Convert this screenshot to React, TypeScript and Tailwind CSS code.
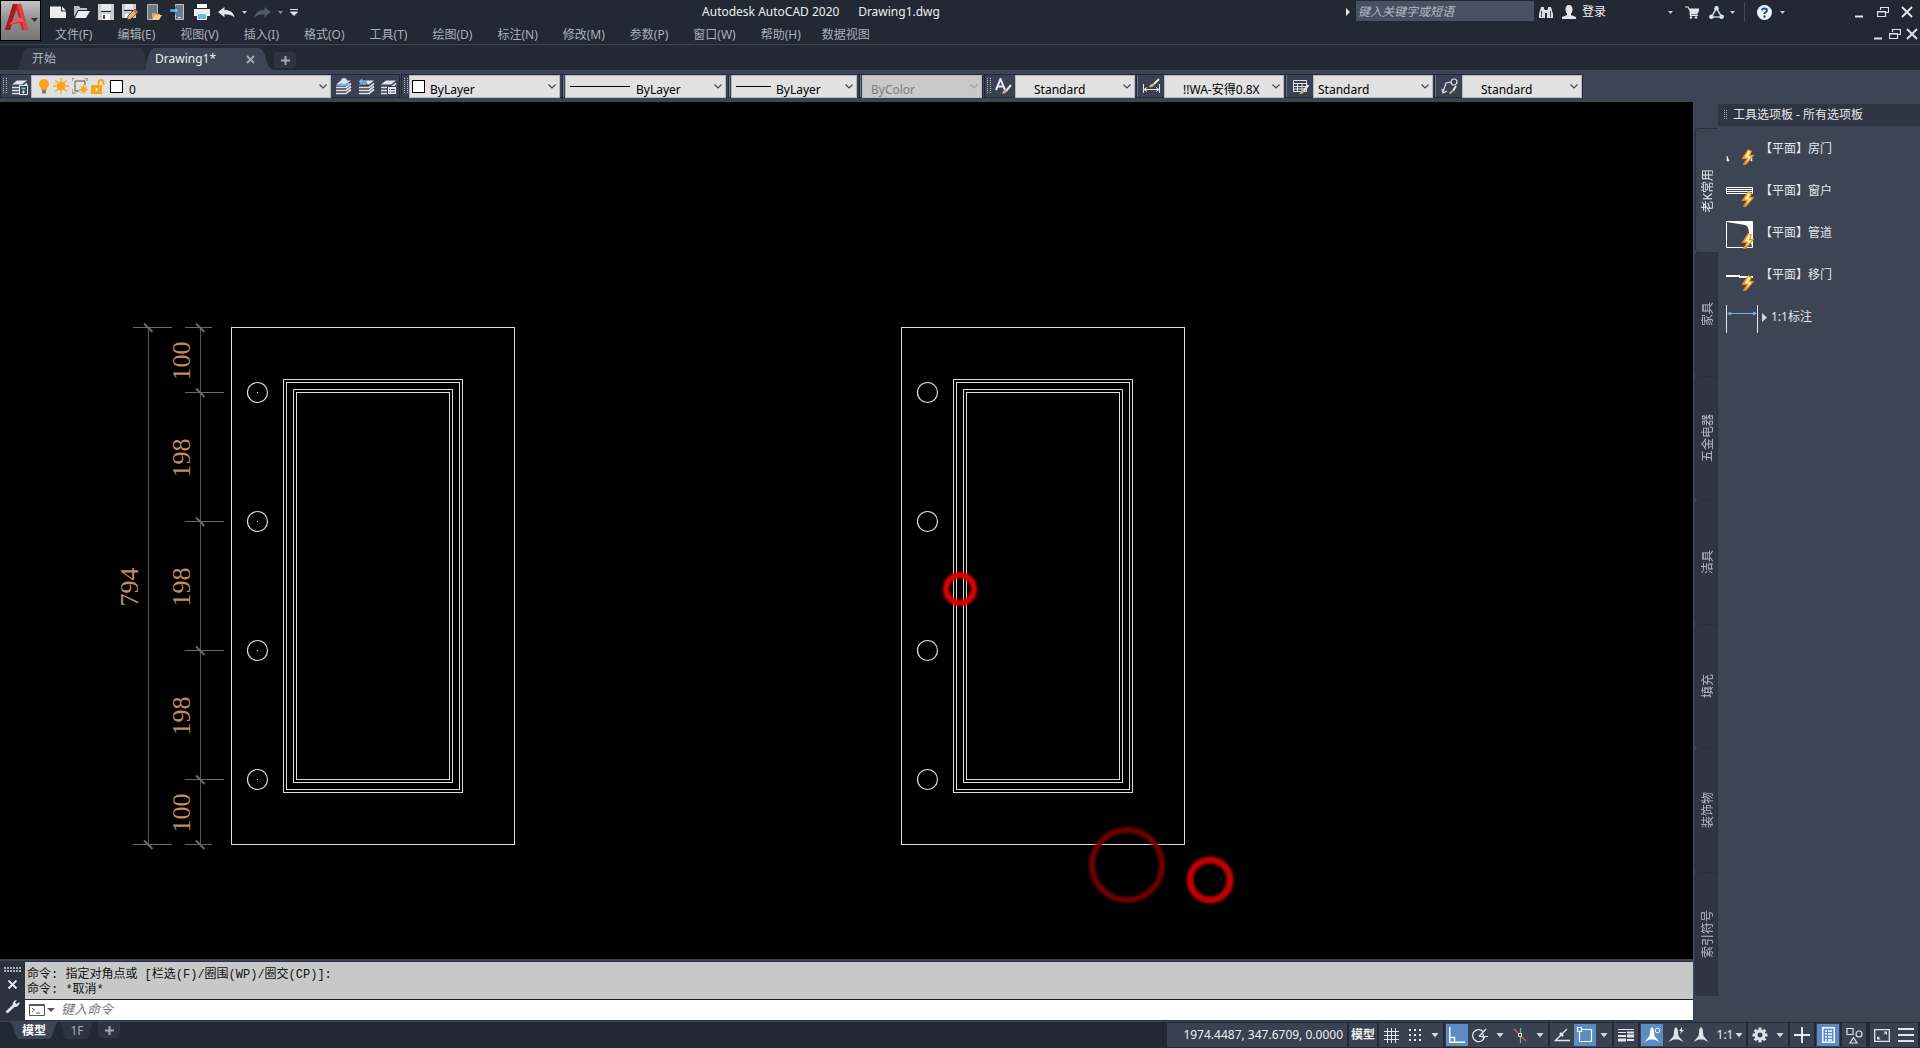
import type { ReactNode } from 'react';

interface IconProps {
    children: ReactNode;
    label: string;
    className?: string;
}

// Plain icon button used by every bar
function IconButton({ children, label, className = 'w-6 h-6' }: IconProps) {
    return (
        <button aria-label={label} className={`flex shrink-0 items-center justify-center ${className}`}>
            {children}
        </button>
    );
}

function Caret({ label, className = 'w-4 h-6' }: { label: string; className?: string }) {
    return (
        <IconButton label={label} className={className}>
            <svg width="8" height="5" viewBox="0 0 8 5"><path d="M0.5 0h7L4 4.5z" fill="#d5d8de" /></svg>
        </IconButton>
    );
}

function SmallCaret({ label, className = 'w-2 h-6', fill = '#c8ccd4' }: { label: string; className?: string; fill?: string }) {
    return (
        <IconButton label={label} className={className}>
            <svg width="5" height="3" viewBox="0 0 5 3"><path d="M0 0h5L2.5 3z" fill={fill} /></svg>
        </IconButton>
    );
}

function Grip() {
    return (
        <svg width="4" height="16" className="shrink-0" viewBox="0 0 4 16">
            {[1, 3, 5, 7, 9, 11, 13, 15].map((y) => (
                <path key={y} d={`M0 ${y - 0.5}h1M3 ${y - 0.5}h1`} stroke="#b9bfca" />
            ))}
        </svg>
    );
}

function Divider() {
    return <span className="mx-px h-[22px] w-0.5 shrink-0 border-r border-[#6d7486] bg-[#222834]" />;
}

interface PickerProps {
    label: string;
    value: string;
    width: string;
    pad?: string;
    disabled?: boolean;
    children?: ReactNode;
}

function Picker({ label, value, width, pad = 'pl-1.5', disabled = false, children }: PickerProps) {
    return (
        <div className={`relative h-[23px] shrink-0 border border-[#b4b6c0] ${disabled ? 'bg-[#c9c9c9]' : 'bg-[#e1e1e1]'} ${width}`}>
            <select
                aria-label={label}
                disabled={disabled}
                defaultValue={value}
                className={`h-full w-full appearance-none overflow-hidden bg-transparent pr-5 pb-0.5 text-[12px] ${pad} ${disabled ? 'text-[#7d7d7d]' : 'text-black'}`}
            >
                <option>{value}</option>
            </select>
            <div className="pointer-events-none absolute inset-y-0 left-0 flex items-center">{children}</div>
            <svg width="8" height="5" viewBox="0 0 8 5" className="pointer-events-none absolute top-2 right-[3px]">
                <path d="M0.5 0.5L4 4L7.5 0.5" fill="none" stroke={disabled ? '#a5a5a5' : '#444'} strokeWidth="1.1" />
            </svg>
        </div>
    );
}

const menus = ['文件(F)', '编辑(E)', '视图(V)', '插入(I)', '格式(O)', '工具(T)', '绘图(D)', '标注(N)', '修改(M)', '参数(P)', '窗口(W)', '帮助(H)'];

function WindowControls({ small = false }: { small?: boolean }) {
    const cell = small ? 'w-[17px] h-5' : 'w-6 h-6';
    return (
        <div className="flex shrink-0">
            <IconButton label="最小化" className={cell}>
                <svg width="12" height="12" viewBox="0 0 12 12"><path d="M2 10.5h8" stroke="#dfe2e8" strokeWidth="2" /></svg>
            </IconButton>
            <IconButton label="还原" className={cell}>
                <svg width="12" height="12" viewBox="0 0 12 12" fill="none" stroke="#dfe2e8">
                    <path d="M3.5 4V1.5h8v5H9" strokeWidth="1.2" />
                    <path d="M0.5 5.5h8v5h-8zM0.5 6h8" strokeWidth="1.2" />
                </svg>
            </IconButton>
            <IconButton label="关闭" className={cell}>
                <svg width="12" height="12" viewBox="0 0 12 12"><path d="M1 1l10 10M11 1L1 11" stroke="#e6e9ee" strokeWidth="1.8" /></svg>
            </IconButton>
        </div>
    );
}

function QuickAccess() {
    return (
        <div className="flex shrink-0 items-center pl-[5px]">
            <IconButton label="新建">
                <svg width="18" height="16" viewBox="0 0 18 16"><path d="M1 2.5h11v5h5v6.500H1z" fill="#eceef1" /><path d="M13 2.500L17 6.500h-4z" fill="#eceef1" /></svg>
            </IconButton>
            <IconButton label="打开">
                <svg width="18" height="16" viewBox="0 0 18 16"><path d="M1 2h5l1.500 2H14v2H5L1 13z" fill="#b9bdc4" /><path d="M5.500 7H17l-4 7H2z" fill="#eceef1" /></svg>
            </IconButton>
            <IconButton label="保存">
                <svg width="16" height="16" viewBox="0 0 16 16"><path d="M0 0h16v16H0z" fill="#c9cbd0" /><path d="M3 0h10v6H3z" fill="#e9e9ec" /><path d="M3 7h10v1H3z" fill="#222933" /><path d="M4 10h8v6H4z" fill="#fff" /><path d="M5 11h2v4H5z" fill="#444b57" /></svg>
            </IconButton>
            <IconButton label="另存为">
                <svg width="16" height="16" viewBox="0 0 16 16"><path d="M0 0h14v14H0z" fill="#c9cbd0" /><path d="M3 0h8v5H3z" fill="#e9e9ec" /><path d="M2 6h10v1H2z" fill="#222933" /><path d="M3 10h5v4H3z" fill="#fff" /><path d="M13 5l3 3-7 7-4 1 1-4z" fill="#e8b768" stroke="#222933" strokeWidth=".7" /><path d="M13 5l3 3-2 2-3-3z" fill="#e26e5c" /></svg>
            </IconButton>
            <IconButton label="从 Web 和 Mobile 中打开">
                <svg width="16" height="16" viewBox="0 0 16 16"><path d="M1.500 0.500h10v15h-10z" fill="#737a85" stroke="#aeb3bb" /><path d="M6 9h3l1 1h4v2H9l-3 3z" fill="#e0a84e" /><path d="M9 11h7l-3 5H6z" fill="#f7ce84" /></svg>
            </IconButton>
            <IconButton label="保存到 Web 和 Mobile">
                <svg width="16" height="16" viewBox="0 0 16 16"><path d="M5.500 0.500h8v15h-8z" fill="#737a85" stroke="#c0c4ca" /><path d="M0 5h5V2.500L9.500 6.500 5 10.500V8H0z" fill="#6ab4ec" stroke="#222933" strokeWidth=".5" /><path d="M8 13.500h3" stroke="#ddd" /></svg>
            </IconButton>
            <IconButton label="打印">
                <svg width="16" height="16" viewBox="0 0 16 16"><path d="M3 0h10v4H3z" fill="#fff" /><path d="M0 5h16v7h-3V9H3v3H0z" fill="#eceef1" /><path d="M3.500 9.500h9v6h-9z" fill="#6db5ef" stroke="#fff" /></svg>
            </IconButton>
            <IconButton label="放弃">
                <svg width="17" height="11" viewBox="0 0 17 11"><path d="M0 5L6.500 0v3C12 3 15.500 5 16.500 10.500 14 8 11 7.200 6.500 7.200v3z" fill="#e4e6ea" /></svg>
            </IconButton>
            <SmallCaret label="放弃列表" className="w-3 h-6" />
            <IconButton label="重做">
                <svg width="17" height="11" viewBox="0 0 17 11"><path d="M17 5L10.500 0v3C5 3 1.500 5 .5 10.500 3 8 6 7.200 10.500 7.200v3z" fill="#515965" /></svg>
            </IconButton>
            <SmallCaret label="重做列表" className="w-3 h-6" fill="#8b919b" />
            <IconButton label="自定义快速访问工具栏" className="w-4 h-6">
                <svg width="8" height="7" viewBox="0 0 8 7"><path d="M0 .5h8M0.500 3h7L4 6.500z" stroke="#dfe2e8" strokeWidth="1" fill="#dfe2e8" /></svg>
            </IconButton>
        </div>
    );
}

function Header() {
    return (
        <header className="flex h-[45px] shrink-0 border-b border-[#3d4450] bg-[#222933]">
            <button aria-label="应用程序菜单" className="h-[41px] w-[41px] shrink-0 border border-black bg-linear-to-b from-[#c3c3c3] via-[#8f8f8f] to-[#777]">
                <svg width="39" height="39" viewBox="0 0 39 39">
                    <path d="M12 3h8l7 26h-6l-2-7-8 1-2 6H4z" fill="#c9252c" />
                    <path d="M12 3h4L9 29H4z" fill="#a81920" />
                    <path d="M16 3h4l7 26h-4z" fill="#e0444a" />
                    <path d="M15.500 9l3 9-7 1z" fill="#8c8c8c" />
                    <path d="M8 24c3-5 8-7 13-7l1 4c-6 0-10 1-14 3z" fill="#ef5a5e" />
                    <path d="M30 17h7l-3.500 4z" fill="#333" />
                </svg>
            </button>
            <div className="flex min-w-0 flex-1 flex-col">
                <div className="flex h-6 items-center">
                    <QuickAccess />
                    <h1 className="min-w-0 flex-1 text-center text-[12px] leading-5 whitespace-pre text-[#eceef1]">{'Autodesk AutoCAD 2020      Drawing1.dwg'}</h1>
                    <IconButton label="展开搜索" className="w-4 h-6">
                        <svg width="4" height="8" viewBox="0 0 4 8"><path d="M0 0l4 4-4 4z" fill="#e4e6ea" /></svg>
                    </IconButton>
                    <input aria-label="搜索" placeholder="键入关键字或短语" className="mb-0.5 h-5 w-[178px] bg-[#485161] px-0.5 text-[12px] italic text-white placeholder:text-[#b5bac4]" />
                    <IconButton label="查找">
                        <svg width="14" height="13" viewBox="0 0 14 13" fill="#d9dce2"><path d="M2 1h3v2l1 1v8H0V8zM12 1H9v2L8 4v8h6V8z" /><path d="M6 4h2v3H6z" /><path d="M2.500 5v6M11.500 5v6" stroke="#4a5260" /></svg>
                    </IconButton>
                    <button className="flex h-6 items-center gap-1.5 pl-1 text-[12px] text-[#eceef1]">
                        <svg width="14" height="14" viewBox="0 0 14 14" fill="#e4e6ea"><ellipse cx="7" cy="4.500" rx="3.500" ry="4.500" /><path d="M5 8h4v2l5 2v2H0v-2l5-2z" /></svg>
                        登录
                    </button>
                    <SmallCaret label="登录选项" className="ml-[60px] w-2 h-6" />
                    <div className="ml-1.5 flex items-center">
                        <IconButton label="Autodesk App Store">
                            <svg width="14" height="13" viewBox="0 0 14 13"><path d="M0 1h3l1 2h10l-2 5H5l.5 1.500H13" fill="none" stroke="#dfe2e8" strokeWidth="1.200" /><path d="M4 3h10l-2 5H5z" fill="#dfe2e8" /><circle cx="6" cy="11.500" r="1.300" fill="#dfe2e8" /><circle cx="11" cy="11.500" r="1.300" fill="#dfe2e8" /></svg>
                        </IconButton>
                        <IconButton label="保持连接">
                            <svg width="15" height="13" viewBox="0 0 15 13"><path d="M7.500 2L2.500 11h10z" fill="none" stroke="#b9c6dc" strokeWidth="1.600" /><g fill="#dfe6f2"><circle cx="7.500" cy="2.200" r="2.200" /><circle cx="2.300" cy="10.700" r="2.200" /><circle cx="12.700" cy="10.700" r="2.200" /></g></svg>
                        </IconButton>
                        <SmallCaret label="连接选项" />
                        <span className="mx-2 h-5 w-px bg-[#434a57]" />
                        <IconButton label="帮助" className="w-[22px] h-6">
                            <svg width="15" height="15" viewBox="0 0 15 15"><circle cx="7.500" cy="7.500" r="7.500" fill="#eef2f8" /><path d="M5 5.500C5 2.800 10 2.800 10 5.500 10 7.200 7.500 7 7.500 9" fill="none" stroke="#1d4b93" strokeWidth="1.900" /><circle cx="7.500" cy="11.500" r="1.200" fill="#1d4b93" /></svg>
                        </IconButton>
                        <SmallCaret label="帮助选项" className="w-3.5 h-6" />
                    </div>
                    <div className="ml-[58px] pr-px"><WindowControls /></div>
                </div>
                <div className="flex h-5 items-center justify-between">
                    <nav className="flex gap-[25px] pt-0.5 pl-3.5 text-[12px] text-[#a9aeb8]">
                        {menus.map((menu) => <button key={menu}>{menu}</button>)}
                        <button className="-ml-1">数据视图</button>
                    </nav>
                    <WindowControls small />
                </div>
            </div>
        </header>
    );
}

function FileTabs() {
    return (
        <div className="flex h-[25px] shrink-0 items-end bg-[#222933] pl-4 text-[12px]">
            <button className="relative h-[22px] w-[130px] pl-4 text-left text-[#b0b5bf]">
                <svg className="absolute inset-0 h-full w-full" viewBox="0 0 130 22" preserveAspectRatio="none"><path d="M0 22C6 20 4 2 12 0H124C128 1 130 10 130 22z" fill="#2f3541" /></svg>
                <span className="relative">开始</span>
            </button>
            <div className="relative flex h-[22px] w-[128px] items-center pr-4 pl-[9px] text-[#eceef1]">
                <svg className="absolute inset-0 h-full w-full" viewBox="0 0 128 22" preserveAspectRatio="none"><path d="M-4 22C2 20 1 2 8 0H112C122 1 118 20 128 22z" fill="#3d4453" /></svg>
                <button className="relative flex-1 text-left">Drawing1*</button>
                <IconButton label="关闭图形" className="relative w-4 h-5">
                    <svg width="9" height="9" viewBox="0 0 9 9"><path d="M1 1l7 7M8 1L1 8" stroke="#a2a8b3" strokeWidth="2" /></svg>
                </IconButton>
            </div>
            <IconButton label="新图形" className="mb-0.5 h-4 w-[22px] rounded bg-[#2e3441]">
                <svg width="9" height="9" viewBox="0 0 9 9"><path d="M4.500 0v9M0 4.500h9" stroke="#a2a8b3" strokeWidth="2" /></svg>
            </IconButton>
        </div>
    );
}

function Layers({ children }: { children?: ReactNode }) {
    return (
        <svg width="17" height="17" viewBox="0 0 17 17">
            <path d="M6 2.500h10l-5 4H1z" fill="#e4e6ea" />
            <path d="M1 9.500h10l5-4M1 12.500h10l5-4M1 15.500h10l5-4" fill="none" stroke="#dfe2e8" strokeWidth="1.700" />
            {children}
        </svg>
    );
}

function Toolbar() {
    return (
        <div className="flex h-8 shrink-0 items-center gap-px bg-[#3d4454]">
            <div className="flex h-6 items-center border border-[#222834] bg-[#3a4151] pl-0.5">
                <Grip />
                <IconButton label="图层特性管理器" className="w-6 h-6">
                    <Layers><path d="M8.500 7.500h8v9h-8z" fill="#3a4151" stroke="#e4e6ea" /><path d="M10.500 9.500h4v2h-4z" fill="#6db5ef" /><path d="M12.500 12.500v3M11 14h3" stroke="#fff" /></Layers>
                </IconButton>
                <Picker label="图层" value="0" width="w-[300px]" pad="pl-[97px]">
                    <div className="flex items-center pl-1.5">
                        <svg width="12" height="15" viewBox="0 0 12 15"><circle cx="6" cy="5" r="5" fill="#f9a51a" /><path d="M3 8h6v3H3z" fill="#f9a51a" /><path d="M4 11h4v3.500H4z" fill="#777" /></svg>
                        <svg width="16" height="16" viewBox="0 0 16 16" className="ml-[3px]"><circle cx="8" cy="8" r="4.500" fill="#f9a51a" /><path d="M8 0v3M8 13v3M0 8h3M13 8h3M2.500 2.500l2 2M11.500 11.500l2 2M2.500 13.500l2-2M11.500 4.500l2-2" stroke="#f9a51a" strokeWidth="1.300" /></svg>
                        <svg width="16" height="16" viewBox="0 0 16 16" className="ml-[3px]"><path d="M3 3h10v10H3z" fill="none" stroke="#555" /><path d="M0 3V0h3M12 0h3v3M0 11v4h4" fill="none" stroke="#777" /><circle cx="11.500" cy="11.500" r="4.500" fill="#e1e1e1" /><circle cx="11.500" cy="11.500" r="3" fill="#f9a51a" /><path d="M11.500 7v9M7 11.500h9M8.500 8.500l6 6M14.500 8.500l-6 6" stroke="#f9a51a" strokeWidth=".8" /></svg>
                        <svg width="14" height="15" viewBox="0 0 14 15" className="ml-[3px]"><path d="M0 6h11v9H0z" fill="#f9a51a" /><path d="M7.500 6V3.500a2.500 2.500 0 0 1 5 0V6" fill="none" stroke="#f9a51a" strokeWidth="1.800" /><path d="M5.500 9v3" stroke="#fff" strokeWidth="1.500" /></svg>
                        <span className="ml-[5px] h-[13px] w-[13px] border border-black bg-white" />
                    </div>
                </Picker>
                <IconButton label="将对象的图层置为当前">
                    <Layers><path d="M6 5h9l-4 3H1z" fill="#6db5ef" /><circle cx="9" cy="3" r="3" fill="#dfe2e8" /></Layers>
                </IconButton>
                <IconButton label="上一个图层" className="w-[22px] h-6">
                    <Layers><path d="M0 3.500L4.500 0v2C8 2 9 4 9 7 7.500 5 6.500 5 4.500 5v2z" fill="#6db5ef" stroke="#3a4151" strokeWidth=".5" /></Layers>
                </IconButton>
                <IconButton label="图层状态管理器" className="w-[22px] h-6">
                    <Layers><path d="M7.500 8.500h9v8h-9z" fill="#e4e6ea" stroke="#3a4151" /><path d="M9 11.500h1M11 11.500h4M9 14h1M11 14h4" stroke="#444b57" /></Layers>
                </IconButton>
            </div>

            <div className="flex h-6 items-center border border-[#222834] bg-[#3a4151] pl-0.5">
                <Grip />
                <span className="w-px" />
                <Picker label="颜色" value="ByLayer" width="w-[151px]" pad="pl-5">
                    <span className="ml-0.5 h-[13px] w-[13px] border border-black bg-white" />
                </Picker>
                <span className="w-px" />
                <Divider />
                <Picker label="线型" value="ByLayer" width="w-[161px]" pad="pl-[70px]">
                    <span className="ml-1 h-px w-[60px] bg-black" />
                </Picker>
                <span className="w-px" />
                <Divider />
                <Picker label="线宽" value="ByLayer" width="w-[126px]" pad="pl-11">
                    <span className="ml-1 h-px w-[35px] bg-black" />
                </Picker>
                <span className="w-px" />
                <Divider />
                <Picker label="打印样式" value="ByColor" width="w-[120px]" pad="pl-2" disabled />
            </div>

            <div className="flex h-6 items-center border border-[#222834] bg-[#3a4151] pl-0.5">
                <Grip />
                <IconButton label="文字样式">
                    <svg width="17" height="17" viewBox="0 0 17 17"><path d="M1 12L5.500 1 10 12M3 8.500h5.500" fill="none" stroke="#e4e6ea" strokeWidth="2" /><path d="M16 7l-5 6" stroke="#e4e6ea" strokeWidth="2" /><path d="M7 15.500c1-3 3-4 5-2.500-1 2-3 3-5 2.500z" fill="#d8ae7a" /></svg>
                </IconButton>
                <Picker label="文字样式列表" value="Standard" width="w-[120px]" pad="pl-[18px]" />
                <Divider />
                <IconButton label="标注样式" className="w-[25px] h-6">
                    <svg width="17" height="17" viewBox="0 0 17 17"><path d="M.5 6v9M16.500 6v9M1 11.500h15M4 9.500l-3 2 3 2M13 9.500l3 2-3 2" fill="none" stroke="#dfe2e8" /><path d="M16 1l-5 5" stroke="#e4e6ea" strokeWidth="2" /><path d="M6 9c1-3 3-4 6-3-1 2-3 4-6 3z" fill="#d8ae7a" /></svg>
                </IconButton>
                <Picker label="标注样式列表" value="!!WA-安得0.8X" width="w-[120px]" pad="pl-[18px]" />
                <Divider />
                <IconButton label="表格样式" className="w-[25px] h-6">
                    <svg width="17" height="17" viewBox="0 0 17 17"><path d="M1.500 2.500h13v11h-13zM1.500 5.500h13M1.500 8.500h13M1.500 11h13M5.500 5v8.500M10 5v8.500" fill="none" stroke="#dfe2e8" /><path d="M16.500 7l-5 6" stroke="#e4e6ea" strokeWidth="2" /><path d="M7.500 16c1-3 3-4 5-3-1 2-3 3.500-5 3z" fill="#d8ae7a" /></svg>
                </IconButton>
                <Picker label="表格样式列表" value="Standard" width="w-[120px]" pad="pl-1" />
                <Divider />
                <IconButton label="多重引线样式" className="w-[25px] h-6">
                    <svg width="17" height="17" viewBox="0 0 17 17"><path d="M2 14L5 5l5-1M1 11l1 4 4-2" fill="none" stroke="#dfe2e8" strokeWidth="1.200" /><circle cx="13" cy="4" r="3" fill="none" stroke="#dfe2e8" strokeWidth="1.200" /><path d="M15 8l-3 5" stroke="#e4e6ea" strokeWidth="2" /><path d="M8 16c1-3 2-4 4-3-1 2-2 3-4 3z" fill="#d8ae7a" /></svg>
                </IconButton>
                <Picker label="多重引线样式列表" value="Standard" width="w-[120px]" pad="pl-[18px]" />
            </div>
        </div>
    );
}

const holes = [290.5, 419.5, 548.5, 677.5];

function Door({ x, marks = false }: { x: number; marks?: boolean }) {
    return (
        <g transform={`translate(${x} 225)`} fill="none" stroke="#dcdcdc">
            <rect x=".5" y=".5" width="283" height="517" />
            <rect x="52.500" y="52.500" width="179" height="413" />
            <rect x="55.500" y="55.500" width="173" height="407" />
            <rect x="62.500" y="62.500" width="159" height="393" />
            <rect x="65.500" y="65.500" width="153" height="387" />
            {holes.map((y) => (
                <g key={y}>
                    <circle cx="26.500" cy={y - 225} r="10" strokeWidth="1.200" />
                    {marks && <rect x="26" y={y - 225.5} width="1" height="1" fill="#fff" stroke="none" />}
                </g>
            ))}
        </g>
    );
}

function Tick({ x, y, from, to }: { x: number; y: number; from: number; to: number }) {
    return (
        <g stroke="#6a6a6a">
            <path d={`M${from} ${y}H${to}`} />
            <path d={`M${x - 4} ${y - 4}l8.500 8.500`} strokeWidth="2" />
        </g>
    );
}

const dimensions = [
    { x: 190, y: 259, text: '100' },
    { x: 190, y: 356, text: '198' },
    { x: 190, y: 485, text: '198' },
    { x: 190, y: 614, text: '198' },
    { x: 190, y: 711, text: '100' },
    { x: 138, y: 485, text: '794' },
];

function Drawing() {
    return (
        <main className="min-h-0 flex-1 overflow-hidden bg-black">
            <svg className="h-full w-full">
                <defs>
                    <filter id="soft" x="-30%" y="-30%" width="160%" height="160%"><feGaussianBlur stdDeviation="1" /></filter>
                </defs>
                <path d="M148.500 225.500v517M200.500 225.500v517" stroke="#555" />
                <Tick x={148} y={225.5} from={133} to={172} />
                <Tick x={148} y={742.5} from={133} to={172} />
                <Tick x={200} y={225.5} from={185} to={212} />
                <Tick x={200} y={742.5} from={185} to={212} />
                {holes.map((y) => <Tick key={y} x={200} y={y} from={185} to={224} />)}
                {dimensions.map((d, i) => (
                    <text key={i} transform={`translate(${d.x} ${d.y}) rotate(-90)`} textAnchor="middle" fill="#c08e5e" className="font-['Liberation_Serif',serif] text-[26px]">
                        {d.text}
                    </text>
                ))}
                <Door x={231} marks />
                <Door x={901} />
                {/* click ripples */}
                <g fill="none" filter="url(#soft)">
                    <circle cx="960" cy="487" r="14" stroke="#e00000" strokeWidth="6" />
                    <circle cx="1127" cy="763" r="35" stroke="#7a0000" strokeWidth="6" strokeOpacity=".9" />
                    <circle cx="1210" cy="778" r="20" stroke="#c00000" strokeWidth="7" />
                </g>
            </svg>
        </main>
    );
}

function CommandLine() {
    return (
        <section className="flex h-[62px] shrink-0 border-t-2 border-[#3d4454] bg-[#2c3240]">
            <div className="flex w-[25px] shrink-0 flex-col items-center gap-1 pt-1.5">
                <svg width="18" height="5" viewBox="0 0 18 5">
                    {[0, 3, 6, 9, 12, 15].map((x) => <path key={x} d={`M${x} 1h2M${x} 4h2`} stroke="#d5d8de" strokeWidth="1.500" />)}
                </svg>
                <IconButton label="关闭命令行" className="w-5 h-4">
                    <svg width="9" height="9" viewBox="0 0 9 9"><path d="M.5.5l8 8M8.500.5l-8 8" stroke="#dfe2e8" strokeWidth="2" /></svg>
                </IconButton>
                <IconButton label="自定义" className="w-5 h-5">
                    <svg width="15" height="15" viewBox="0 0 15 15"><path d="M1.500 13.500L9 6.500" stroke="#e4e6ea" strokeWidth="2.800" /><path d="M8 7C7 4 9 1 12 1l-2 2.500 1.500 1.500L14.500 3C15 6 12 8.500 9 8z" fill="#e4e6ea" /></svg>
                </IconButton>
            </div>
            <div className="flex min-w-0 flex-1 flex-col pt-px pb-px font-['Liberation_Mono','Noto_Sans_CJK_SC',monospace]">
                <div className="flex-1 bg-[#c8c8c8] pt-1.5 pl-0.5 text-[12px] leading-[15px] text-[#111]">
                    <p>命令: 指定对角点或 [栏选(F)/圈围(WP)/圈交(CP)]:</p>
                    <p>命令: *取消*</p>
                </div>
                <div className="flex h-[21px] items-center border-t border-[#222] bg-white pl-1">
                    <IconButton label="最近使用的命令" className="gap-0.5">
                        <svg width="16" height="12" viewBox="0 0 16 12"><path d="M.5.5h15v11H.5zM0 1.500h16" fill="none" stroke="#555" /><path d="M3 4l2.500 2L3 8M7 9h4" fill="none" stroke="#555" /></svg>
                        <svg width="8" height="4" viewBox="0 0 8 4"><path d="M0 0h8L4 4z" fill="#555" /></svg>
                    </IconButton>
                    <input aria-label="命令" placeholder="键入命令" className="ml-1.5 h-full flex-1 text-[13px] italic text-black placeholder:text-[#777]" />
                </div>
            </div>
        </section>
    );
}

const paletteTabs = ['老K常用', '家具', '五金电器', '洁具', '填充', '装饰物', '索引符号'];

function Bolt() {
    return (
        <svg width="14" height="16" viewBox="0 0 14 16" className="absolute top-3 left-[15px]">
            <path d="M7 0l4 2-1.500 4H13.500L5 16l-3.500-.5L5.500 10H.5z" fill="#e8931f" />
            <path d="M7.500 1.500L3.500 8.500h4L5 13.500 11 7.200H7.500L9.500 2.500z" fill="#fff0b0" />
        </svg>
    );
}

const paletteTools = [
    { name: '【平面】房门', art: <path d="M1 19v5h2zM25 21h1v3h-1z" fill="#fff" stroke="#fff" strokeWidth=".5" /> },
    { name: '【平面】窗户', art: <path d="M.5 8.500h26v6H.5zM.5 10.500h26M.5 12.500h26" fill="none" stroke="#fff" /> },
    { name: '【平面】管道', art: <><path d="M.5.5h26v26H.5z" fill="none" stroke="#fff" /><path d="M1 1h25v25l-3-11c0-8-1-10-4-11z" fill="#fff" /></> },
    { name: '【平面】移门', art: <path d="M0 12h14v2H0zM13 13h14v2H13z" fill="#fff" /> },
];

function Palette() {
    return (
        <aside className="flex w-[227px] shrink-0 bg-[#3d4454] pl-0.5 text-[12px] text-[#e4e6ea]">
            <div className="flex w-[23px] shrink-0 flex-col pt-[26px]">
                {paletteTabs.map((tab, i) => (
                    <button
                        key={tab}
                        className={`flex h-[124px] items-center justify-center rounded-l border-t border-l border-[#292f3b] pl-0.5 ${i === 0 ? 'bg-[#3d4454]' : 'border-r bg-[#2f3542] text-[#b5bac4]'}`}
                    >
                        <span className="rotate-180 leading-4 [text-orientation:sideways] [writing-mode:vertical-rl]">{tab}</span>
                    </button>
                ))}
            </div>
            <div className="min-w-0 flex-1 pt-0.5">
                <h2 className="flex h-[22px] items-center gap-1.5 bg-[#2f3542] pl-1.5 leading-5">
                    <svg width="3" height="10" viewBox="0 0 3 10"><path d="M.5 0v10M2.500 0v10" stroke="#a2a8b3" strokeDasharray="1 1" /></svg>
                    工具选项板 - 所有选项板
                </h2>
                <ul className="pt-1.5">
                    {paletteTools.map((tool) => (
                        <li key={tool.name} className="h-[42px]">
                            <button className="flex h-10 items-start gap-0.5 pt-[5px] pl-2">
                                <span className="relative h-8 w-8 shrink-0">
                                    <svg width="27" height="27" viewBox="0 0 27 27">{tool.art}</svg>
                                    <Bolt />
                                </span>
                                <span className="pt-0.5 leading-5">{tool.name}</span>
                            </button>
                        </li>
                    ))}
                    <li>
                        <button className="flex items-start gap-1 pt-[5px] pl-2">
                            <svg width="32" height="28" viewBox="0 0 32 28"><path d="M.5 0v28M31.500 0v28" stroke="#e4e6ea" /><path d="M2 8.500h28" stroke="#6db5ef" /><path d="M1 8.500l4-2v4zM31 8.500l-4-2v4z" fill="#6db5ef" /></svg>
                            <svg width="5" height="9" viewBox="0 0 5 9" className="mt-2"><path d="M0 0l5 4.500L0 9z" fill="#d5d8de" /></svg>
                            <span className="pt-0.5 leading-5">1:1标注</span>
                        </button>
                    </li>
                </ul>
            </div>
        </aside>
    );
}

const active = 'w-[22px] h-[22px] bg-[#5b8cc4]';
const group = 'flex h-6 shrink-0 items-center bg-[#3a4151]';

function LayoutTabs() {
    return (
        <div className="flex items-start gap-0.5 self-start pl-2.5 text-[12px] leading-4">
            <button className="relative h-[17px] w-12 font-bold text-white">
                <svg className="absolute inset-0" width="48" height="17" viewBox="0 0 48 17"><path d="M0 0h48c-5 3-3 14-9 17H9C3 14 5 3 0 0z" fill="#3d4454" /></svg>
                <span className="relative">模型</span>
            </button>
            <button className="relative h-[17px] w-[34px] text-[#a9aeb8]">
                <svg className="absolute inset-0" width="34" height="17" viewBox="0 0 34 17"><path d="M0 0h34c-5 3-3 14-8 17H6C2 14 3 3 0 0z" fill="#2e3441" /></svg>
                <span className="relative">1F</span>
            </button>
            <IconButton label="新建布局" className="ml-0.5 h-4 w-[22px] rounded-b bg-[#2e3441]">
                <svg width="9" height="9" viewBox="0 0 9 9"><path d="M4.500 0v9M0 4.500h9" stroke="#a2a8b3" strokeWidth="2" /></svg>
            </IconButton>
        </div>
    );
}

const person = 'M8 0c1.500 1 2 3 2 5l.5 4 5 6-5-2.500H5.500L.5 15l5-6L6 5c0-2 .5-4 2-5z';

function StatusBar() {
    return (
        <footer className="flex h-[27px] shrink-0 items-center justify-between border-t border-[#3d4454] bg-[#222933] text-[12px] text-[#eceef1]">
            <LayoutTabs />
            <div className="flex items-center gap-0.5 pr-0.5">
                <div className={`${group} w-[180px] justify-end pr-1`}>1974.4487, 347.6709, 0.0000</div>
                <button className={`${group} w-7 justify-center font-bold`}>模型</button>
                <div className={group}>
                    <IconButton label="图形栅格"><svg width="15" height="15" viewBox="0 0 15 15"><path d="M3.500 0v15M7.500 0v15M11.500 0v15M0 3.500h15M0 7.500h15M0 11.500h15" stroke="#e4e6ea" /></svg></IconButton>
                    <IconButton label="捕捉模式"><svg width="13" height="12" viewBox="0 0 13 12" fill="#e4e6ea">{[0, 5, 10].map((y) => [0, 5, 10].map((x) => <rect key={`${x}-${y}`} x={x} y={y} width="2" height="2" />))}</svg></IconButton>
                    <Caret label="捕捉设置" />
                </div>
                <div className={`${group} pl-px`}>
                    <IconButton label="正交模式" className={active}><svg width="16" height="16" viewBox="0 0 16 16"><path d="M.8 0v15.200H16M1 10.500h4.500V15" fill="none" stroke="#fff" strokeWidth="1.400" /></svg></IconButton>
                    <IconButton label="极轴追踪"><svg width="16" height="15" viewBox="0 0 16 15"><path d="M11 3.500A6 6 0 1 0 12.500 9M7 8.500h9M7 8.500L14 1M10 5.500c1.500 1 2 3 1 5" fill="none" stroke="#e4e6ea" strokeWidth="1.200" /></svg></IconButton>
                    <Caret label="极轴设置" />
                    <IconButton label="等轴测草图"><svg width="14" height="15" viewBox="0 0 14 15"><path d="M1 1l12 12" stroke="#d0606c" strokeWidth="1.200" /><path d="M7.500 0v15" stroke="#5fc978" strokeWidth="1.200" /><path d="M5.500 5.500h3v3h-3z" fill="#3a4151" stroke="#e4e6ea" /></svg></IconButton>
                    <Caret label="等轴测设置" />
                </div>
                <div className={group}>
                    <IconButton label="对象捕捉追踪"><svg width="16" height="14" viewBox="0 0 16 14"><path d="M13 1L1.500 12.500H16" fill="none" stroke="#e4e6ea" strokeWidth="1.300" /><path d="M6 5l3 3" stroke="#e4e6ea" strokeWidth="2.500" /></svg></IconButton>
                    <IconButton label="对象捕捉" className={active}><svg width="16" height="16" viewBox="0 0 16 16"><path d="M5 2.500h9.500v12h-12V5M.5.5h4v4h-4z" fill="none" stroke="#fff" strokeWidth="1.200" /></svg></IconButton>
                    <Caret label="捕捉选项" />
                </div>
                <div className={group}>
                    <IconButton label="线宽"><svg width="16" height="14" viewBox="0 0 16 14"><path d="M0 1.500h16M0 4.500h8" stroke="#e4e6ea" /><path d="M9 4.500h7M0 8h8" stroke="#e4e6ea" strokeWidth="2" /><path d="M9 8h7M0 12h8" stroke="#e4e6ea" strokeWidth="3" /><path d="M9 12h7" stroke="#e4e6ea" strokeWidth="2" /></svg></IconButton>
                </div>
                <div className={`${group} w-[106px] gap-px pl-px`}>
                    <IconButton label="注释可见性" className={active}><svg width="17" height="16" viewBox="0 0 17 16"><path d={person} fill="#fff" /><circle cx="13.500" cy="3.500" r="2.300" fill="none" stroke="#fff" /></svg></IconButton>
                    <IconButton label="自动缩放"><svg width="17" height="16" viewBox="0 0 17 16"><path d={person} fill="#dfe2e8" /><path d="M14 0l-3 4h2l-1 3 4-4h-2z" fill="#dfe2e8" /></svg></IconButton>
                    <IconButton label="注释比例"><svg width="16" height="16" viewBox="0 0 16 16"><path d={person} fill="#dfe2e8" /></svg></IconButton>
                    <button className="flex flex-1 items-center justify-center gap-0.5">1:1<svg width="8" height="5" viewBox="0 0 8 5"><path d="M.5 0h7L4 4.500z" fill="#d5d8de" /></svg></button>
                </div>
                <div className={group}>
                    <IconButton label="切换工作空间"><svg width="16" height="16" viewBox="0 0 16 16"><path d="M8 .5v15M.5 8h15M2.700 2.700l10.600 10.600M13.300 2.700L2.700 13.300" stroke="#dfe2e8" strokeWidth="3" /><circle cx="8" cy="8" r="4" fill="#3a4151" stroke="#dfe2e8" strokeWidth="3" /></svg></IconButton>
                    <Caret label="工作空间选项" />
                </div>
                <div className={group}>
                    <IconButton label="注释监视器"><svg width="16" height="16" viewBox="0 0 16 16"><path d="M8 0v16M0 8h16" stroke="#e4e6ea" strokeWidth="2" /></svg></IconButton>
                </div>
                <div className={`${group} w-6 justify-center`}>
                    <IconButton label="快捷特性" className={active}><svg width="13" height="16" viewBox="0 0 13 16"><path d="M.8.8h11.400v14.400H.8z" fill="none" stroke="#fff" strokeWidth="1.400" /><path d="M3 4h2M6 4h4M3 7h2M6 7h4M3 10h2M6 10h4M3 13h2M6 13h4" stroke="#fff" strokeWidth="1.300" /></svg></IconButton>
                </div>
                <div className={group}>
                    <IconButton label="隔离对象"><svg width="17" height="17" viewBox="0 0 17 17"><path d="M1 1.500h6v6H1zM7.500 10.500l3.500 5.500H4z" fill="none" stroke="#dfe2e8" strokeWidth="1.200" /><circle cx="13" cy="7" r="3" fill="none" stroke="#dfe2e8" strokeWidth="1.200" /></svg></IconButton>
                </div>
                <div className={`${group} ml-0.5`}>
                    <IconButton label="全屏显示"><svg width="16" height="13" viewBox="0 0 16 13"><path d="M.7.700h14.600v11.600H.7z" fill="none" stroke="#dfe2e8" strokeWidth="1.300" /><path d="M3 7v3.500h3.500zM13 6V2.500H9.500z" fill="#dfe2e8" /><path d="M4 9.500L6 7.500M12 3.500l-2 2" stroke="#dfe2e8" /></svg></IconButton>
                    <IconButton label="自定义状态栏"><svg width="16" height="14" viewBox="0 0 16 14"><path d="M0 1h16M0 7h16M0 13h16" stroke="#dfe2e8" strokeWidth="2" /></svg></IconButton>
                </div>
            </div>
        </footer>
    );
}

export default function App() {
    return (
        <div className="flex h-screen flex-col overflow-hidden bg-[#222933] font-['Noto_Sans','Noto_Sans_CJK_SC',sans-serif]">
            <Header />
            <FileTabs />
            <Toolbar />
            <div className="flex min-h-0 flex-1">
                <div className="flex min-w-0 flex-1 flex-col">
                    <Drawing />
                    <CommandLine />
                </div>
                <Palette />
            </div>
            <StatusBar />
        </div>
    );
}
